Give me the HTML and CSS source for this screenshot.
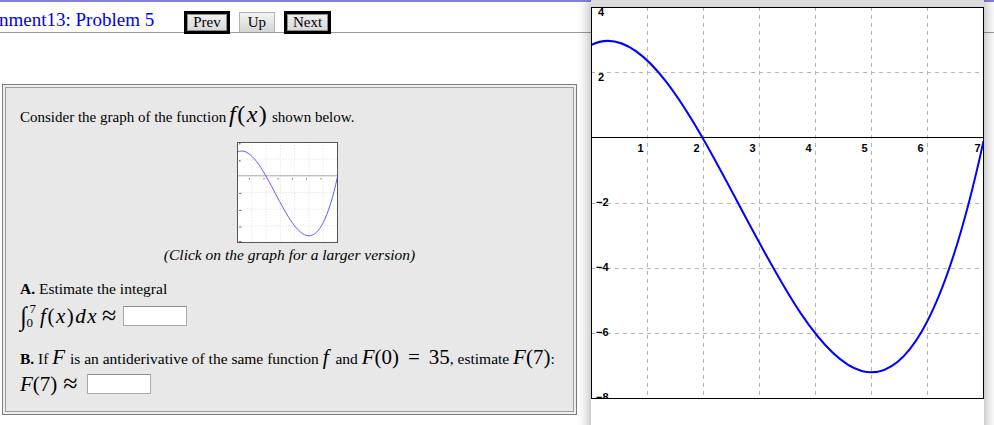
FILE: index.html
```html
<!DOCTYPE html>
<html>
<head>
<meta charset="utf-8">
<title>Problem 5</title>
<link rel="stylesheet" href="styles.css">
</head>
<body>
<div class="topline"></div>
<div class="header">
  <h1 class="title">nment13: Problem 5</h1>
  <div class="nav">
    <span class="btn btn-focus">Prev</span>
    <span class="btn btn-plain">Up</span>
    <span class="btn btn-focus">Next</span>
  </div>
</div>

<div class="box">
  <div class="box-inner">
    <p class="line intro">Consider the graph of the function <span class="m big"><i>f</i>(<i>x</i>)</span> shown below.</p>
    <div class="thumb-wrap">
      <svg class="thumb" width="101" height="101" viewBox="0 0 101 101">
        <rect x="0" y="0" width="101" height="101" fill="#fff"/>
        <g class="tgrid">
          <line x1="14.8" y1="0" x2="14.8" y2="101"/>
          <line x1="29.1" y1="0" x2="29.1" y2="101"/>
          <line x1="43.4" y1="0" x2="43.4" y2="101"/>
          <line x1="57.6" y1="0" x2="57.6" y2="101"/>
          <line x1="71.9" y1="0" x2="71.9" y2="101"/>
          <line x1="86.2" y1="0" x2="86.2" y2="101"/>
          <line x1="0" y1="17.2" x2="101" y2="17.2"/>
          <line x1="0" y1="50.5" x2="101" y2="50.5"/>
          <line x1="0" y1="67.2" x2="101" y2="67.2"/>
          <line x1="0" y1="83.8" x2="101" y2="83.8"/>
        </g>
        <line class="taxis" x1="0" y1="33.8" x2="101" y2="33.8"/>
        <g class="tticks">
          <rect x="12" y="36" width="1" height="1.5"/>
          <rect x="26.5" y="36" width="1" height="1.5"/>
          <rect x="40.5" y="36" width="1" height="1.5"/>
          <rect x="55" y="36" width="1" height="1.5"/>
          <rect x="69" y="36" width="1" height="1.5"/>
          <rect x="83.5" y="36" width="1" height="1.5"/>
          <rect x="2" y="1" width="1.5" height="1.5"/>
          <rect x="2" y="18" width="1.5" height="1.5"/>
          <rect x="2" y="51" width="2.5" height="1"/>
          <rect x="2" y="68" width="2.5" height="1"/>
          <rect x="2" y="84.5" width="2.5" height="1"/>
          <rect x="2" y="99" width="2.5" height="1"/>
        </g>
        <path class="tcurve" d="M0.5 10.08 C33.83 -7.07 67.17 187.87 100.5 34.66"/>
        <rect class="tframe" x="0.5" y="0.5" width="100" height="100"/>
      </svg>
    </div>
    <p class="line caption">(Click on the graph for a larger version)</p>
    <p class="line qa"><b>A.</b> Estimate the integral</p>
    <p class="row int-row"><span class="int">∫</span><span class="lims"><span class="lim-up">7</span><span class="lim-lo">0</span></span><span class="m integrand"><i>f</i>(<i>x</i>)<i>dx</i></span><span class="approx">≈</span><span class="field field-a"></span></p>
    <p class="line qb"><b>B.</b> If <span class="m fbig"><i>F</i></span> is an antiderivative of the same function <span class="m fvar"><i>f</i></span> and <span class="m"><i>F</i>(0)<span class="eq">=</span>35</span>, estimate <span class="m"><i>F</i>(7)</span>:</p>
    <p class="row f-row"><span class="m"><i>F</i>(7)</span><span class="approx approx-f">≈</span><span class="field field-b"></span></p>
  </div>
</div>

<div class="popup">
  <div class="popup-bar"></div>
  <svg class="plot" width="393" height="392" viewBox="0 0 393 392">
    <rect x="0" y="0" width="393" height="392" fill="#fff"/>
    <g class="grid">
      <line x1="56.5" y1="0" x2="56.5" y2="392"/>
      <line x1="112.5" y1="0" x2="112.5" y2="392"/>
      <line x1="168.5" y1="0" x2="168.5" y2="392"/>
      <line x1="224.5" y1="0" x2="224.5" y2="392"/>
      <line x1="280.5" y1="0" x2="280.5" y2="392"/>
      <line x1="336.5" y1="0" x2="336.5" y2="392"/>
      <line x1="0" y1="65.5" x2="393" y2="65.5"/>
      <line x1="0" y1="196.5" x2="393" y2="196.5"/>
      <line x1="0" y1="261.5" x2="393" y2="261.5"/>
      <line x1="0" y1="326.5" x2="393" y2="326.5"/>
    </g>
    <line class="axis" x1="0" y1="130.5" x2="393" y2="130.5"/>
    <path class="curve" d="M0.5 37.97 C131.17 -29.08 261.83 733.1 392.5 134.1"/>
    <g class="lbl">
      <text x="7" y="8.5">4</text>
      <text x="7" y="74">2</text>
      <text x="5" y="198.5">−2</text>
      <text x="5" y="263.5">−4</text>
      <text x="5" y="328.5">−6</text>
      <text x="5" y="393.5">−8</text>
    </g>
    <g class="lbl lbl-x">
      <text x="52.5" y="145">1</text>
      <text x="108.5" y="145">2</text>
      <text x="164.5" y="145">3</text>
      <text x="220.5" y="145">4</text>
      <text x="276.5" y="145">5</text>
      <text x="332.5" y="145">6</text>
      <text x="389.5" y="145">7</text>
    </g>
    <rect class="frame" x="0.5" y="0.5" width="392" height="391"/>
  </svg>
</div>
</body>
</html>
```

FILE: styles.css
```css
html, body {
  margin: 0;
  padding: 0;
}

body {
  width: 994px;
  height: 425px;
  overflow: hidden;
  position: relative;
  background: #fff;
  color: #000;
  font-family: "Liberation Serif", "Times New Roman", serif;
}

.topline {
  height: 2px;
  background: #8383d6;
}

.header {
  height: 30px;
  border-bottom: 1px solid #9a9a9a;
  display: flex;
  align-items: flex-start;
}

.title {
  margin: 7px 0 0 -1px;
  font-size: 19px;
  line-height: 22px;
  font-weight: normal;
  color: #0000f0;
  white-space: nowrap;
}

.nav {
  display: flex;
  align-items: flex-start;
  gap: 9px;
  margin: 9px 0 0 30px;
}

.btn {
  box-sizing: border-box;
  display: inline-block;
  font-size: 15px;
  color: #000;
  text-align: center;
  white-space: nowrap;
}

.btn-focus {
  height: 23px;
  line-height: 17px;
  padding: 0 6px;
  border: 3px solid #000;
  box-shadow: inset 0 0 0 1px #8c8c8c;
  background: linear-gradient(#f0f0f0, #d8d8d8);
}

.btn-plain {
  height: 21px;
  line-height: 19px;
  margin-top: 1px;
  padding: 0 8px;
  border: 1px solid #b4b4b4;
  border-bottom-color: #9a9a9a;
  background: linear-gradient(#f4f4f4, #d4d4d4);
}

/* problem box */
.box {
  box-sizing: border-box;
  width: 575px;
  margin: 51px 0 0 2px;
  border: 1px solid #7b7b7b;
  padding: 2px;
  background: #efefef;
}

.box-inner {
  border: 1px solid #9c9c9c;
  background: #e8e8e8;
  padding: 16px 14px 15px 14px;
  font-size: 15px;
}

.box-inner p {
  margin: 0;
}

.line {
  line-height: 20px;
  white-space: nowrap;
}

.m {
  font-family: "Liberation Serif", "Times New Roman", serif;
  font-size: 21px;
  line-height: 20px;
}

.m.big {
  font-size: 24px;
  letter-spacing: 1.5px;
  margin-left: -1px;
}

.fbig i {
  margin-right: 1px;
}

.fvar i {
  margin-right: 3px;
}

.eq {
  margin: 0 9px;
}

.thumb-wrap {
  display: flex;
  justify-content: center;
  margin: 15px 0 0 -4px;
}

.thumb {
  display: block;
}

.tgrid line {
  stroke: #e2e2e2;
  stroke-width: 0.8;
  stroke-dasharray: 1.5 1.5;
}

.taxis {
  stroke: #a8a8a8;
  stroke-width: 1;
}

.tticks rect {
  fill: #777;
}

.tcurve {
  fill: none;
  stroke: #5c5cff;
  stroke-width: 1;
}

.tframe {
  fill: none;
  stroke: #555;
  stroke-width: 1;
}

.caption {
  margin-top: 2px !important;
  text-align: center;
  font-style: italic;
  font-size: 15.5px;
}

.qa {
  margin-top: 14px !important;
  font-size: 15.5px;
}

.row {
  display: flex;
  align-items: center;
  height: 24px;
  white-space: nowrap;
}

.int-row {
  margin-top: 5px !important;
}

.int {
  font-size: 24px;
  line-height: 1;
  font-style: italic;
  transform: scaleY(1.1);
}

.lims {
  display: inline-flex;
  flex-direction: column;
  justify-content: space-between;
  height: 26px;
  font-size: 13px;
  line-height: 12px;
  margin: 0 4px 0 0;
}

.lim-up {
  margin-left: 3px;
}

.integrand {
  letter-spacing: 1.5px;
}

.approx {
  font-size: 26px;
  line-height: 20px;
  margin: 0 7px 0 4px;
}

.approx-f {
  margin: 0 9px 0 6px;
}

.field {
  display: inline-block;
  box-sizing: border-box;
  width: 64px;
  height: 20px;
  background: #fff;
  border: 1px solid #a9a9a9;
  border-top-color: #8f8f8f;
}

.qb {
  margin-top: 19px !important;
  font-size: 15.5px;
}

.f-row {
  margin-top: 3px !important;
}

/* popup graph window */
.popup {
  position: absolute;
  left: 591px;
  top: 0;
  width: 393px;
  height: 440px;
  background: #fff;
  box-shadow: 0 0 12px 2px rgba(0, 0, 0, 0.3);
}

.popup-bar {
  height: 7px;
  background: #dcdcdc;
}

.plot {
  display: block;
}

.grid line {
  stroke: #b4b4b4;
  stroke-width: 1;
  stroke-dasharray: 4 4;
}

.axis {
  stroke: #000;
  stroke-width: 1;
}

.curve {
  fill: none;
  stroke: #0000ff;
  stroke-width: 2;
}

.lbl text {
  font-family: "Liberation Sans", Arial, sans-serif;
  font-weight: bold;
  font-size: 11px;
  fill: #000;
}

.lbl-x text {
  text-anchor: end;
}

.frame {
  fill: none;
  stroke: #000;
  stroke-width: 1;
}
```
